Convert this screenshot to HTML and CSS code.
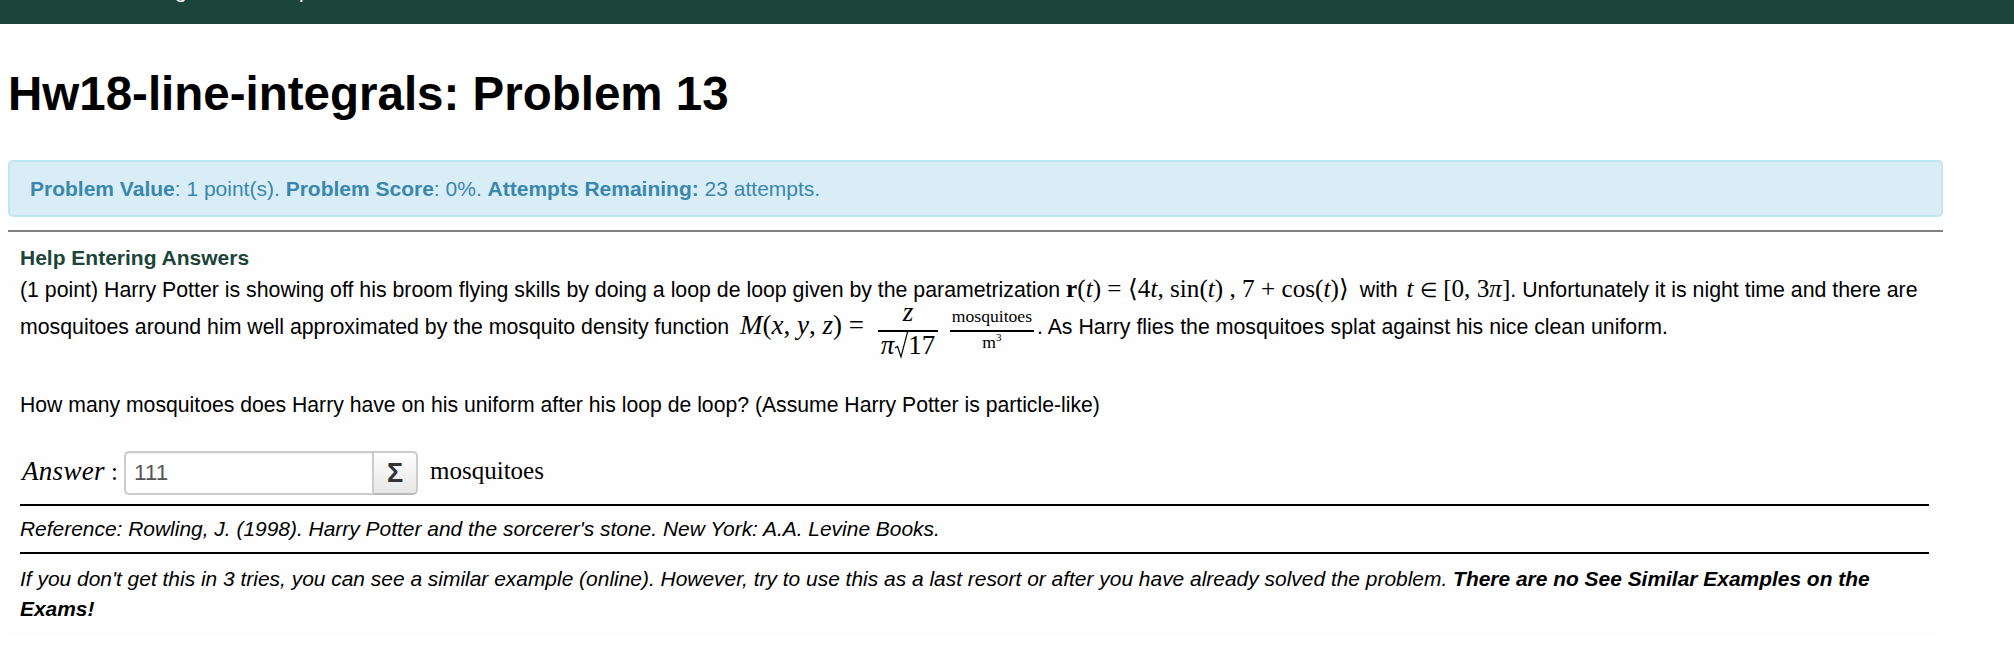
FILE: index.html
```html
<!DOCTYPE html>
<html lang="en">
<head>
    <meta charset="UTF-8">
    <meta name="viewport" content="width=device-width, initial-scale=1.0">
    <title>Hw18-line-integrals: Problem 13</title>
    <link rel="stylesheet" href="styles.css">
</head>
<body>
    <header class="top-bar">
        <span class="top-bar-text">Integrals</span>
        <span class="top-bar-text">Help</span>
    </header>
    <main class="page">
        <h1 class="page-title">Hw18-line-integrals: Problem 13</h1>
        <div class="alert-info">
            <b>Problem Value</b>: 1 point(s). <b>Problem Score</b>: 0%. <b>Attempts Remaining:</b> 23 attempts.
        </div>
        <hr class="page-rule">
        <section class="problem">
            <a class="help-link" href="#">Help Entering Answers</a>
            <div class="problem-text">
                (1 point) Harry Potter is showing off his broom flying skills by doing a loop de loop given by the parametrization
                <span class="math math-curve"><b>r</b>(<i>t</i>) = ⟨4<i>t</i>, sin(<i>t</i>) , 7 + cos(<i>t</i>)⟩</span> with <span class="math math-range"><i>t</i> <span class="elem">∈</span> [0, 3<i>π</i>]</span>. Unfortunately it is night time and there are
                mosquitoes around him well approximated by the mosquito density function
                <span class="math math-big"><i>M</i>(<i>x</i>, <i>y</i>, <i>z</i>) =</span>
                <span class="frac frac-big">
                    <span class="frac-top"><i>z</i></span>
                    <span class="frac-bottom"><i>π</i><svg class="radical" width="14" height="30" viewBox="0 0 14 30"><path d="M1 18 L3.5 16.5 L7 27 L13.5 2 L14 2" fill="none" stroke="#000" stroke-width="1.2"/></svg><span class="root">17</span></span>
                </span>
                <span class="frac frac-small">
                    <span class="frac-top">mosquitoes</span>
                    <span class="frac-bottom">m<sup>3</sup></span>
                </span><span class="after-frac">. As Harry flies the mosquitoes splat against his nice clean uniform.</span>
            </div>
            <p class="question">How many mosquitoes does Harry have on his uniform after his loop de loop? (Assume Harry Potter is particle-like)</p>
            <div class="answer-row">
                <span class="answer-label"><i class="answer-word">Answer</i> :</span>
                <div class="input-group">
                    <input class="answer-input" type="text" value="111">
                    <button class="sigma-btn">Σ</button>
                </div>
                <span class="answer-unit">mosquitoes</span>
            </div>
            <div class="note"><i>Reference: Rowling, J. (1998). Harry Potter and the sorcerer's stone. New York: A.A. Levine Books.</i></div>
            <div class="note note-last"><i>If you don't get this in 3 tries, you can see a similar example (online). However, try to use this as a last resort or after you have already solved the problem. <b>There are no See Similar Examples on the Exams!</b></i></div>
        </section>
    </main>
</body>
</html>
```

FILE: styles.css
```css
body {
    margin: 0;
    padding: 0;
    font-family: "Liberation Sans", Arial, sans-serif;
    font-size: 21px;
    line-height: 30px;
    background-color: #fff;
    color: #000;
}

.top-bar {
    height: 24px;
    background-color: #1c4539;
    overflow: hidden;
    color: #fff;
    display: flex;
    gap: 47px;
    padding-left: 140px;
}

.top-bar-text {
    margin-top: -24px;
}

.page {
    padding: 0 71px 0 8px;
}

.page-title {
    font-size: 47.5px;
    line-height: 52px;
    font-weight: bold;
    margin: 44px 0 0;
}

.alert-info {
    margin-top: 40px;
    height: 57px;
    box-sizing: border-box;
    padding: 12px 20px;
    background-color: #d9edf7;
    border: 2px solid #bce8f1;
    border-radius: 5px;
    color: #3a87ad;
}

.page-rule {
    margin: 13px 0 0;
    border: 0;
    border-top: 2px solid #808080;
}

.problem {
    height: 405px;
    box-sizing: border-box;
    padding: 12px 14px 0 12px;
    background-color: #fefefe;
}

.help-link {
    display: block;
    margin-bottom: 2px;
    color: #1c4539;
    font-weight: bold;
    text-decoration: none;
    line-height: 28px;
}

.problem-text {
    font-size: 21.3px;
}

.math {
    font-family: "Liberation Serif", serif;
    font-size: 25.2px;
}

.math-curve {
    margin-right: 5px;
}

.math-range {
    margin-left: 3px;
}

.math-big {
    font-size: 27px;
    margin-left: 5px;
}

.elem {
    font-size: 20px;
}

.frac {
    display: inline-flex;
    flex-direction: column;
    vertical-align: middle;
    text-align: center;
    font-family: "Liberation Serif", serif;
    margin: -5px 0 -15px 6px;
}

.frac-top {
    border-bottom: 2px solid #000;
    line-height: 24px;
    padding-bottom: 6px;
}

.frac-bottom {
    line-height: 30px;
    padding-bottom: 4px;
    margin: -2px 0 2px;
}

.frac-big {
    font-size: 27px;
    width: 60px;
    margin-left: 8px;
}

.frac-small {
    font-size: 17.6px;
}

.frac-small .frac-top {
    padding: 5px 2px 3px;
    line-height: 22px;
}

.frac-small .frac-bottom {
    line-height: 20px;
    padding-bottom: 14px;
    margin: 0;
}

.frac-small sup {
    font-size: 11px;
    line-height: 0;
}

.after-frac {
    margin-left: 3px;
}

.radical {
    vertical-align: -6px;
}

.root {
    border-top: 1px solid #000;
    display: inline-block;
    line-height: 28px;
}

.question {
    margin: 39px 0 0;
    font-size: 21.2px;
}

.answer-row {
    display: flex;
    align-items: center;
    margin-top: 31px;
    padding-bottom: 9px;
    border-bottom: 2px solid #000;
    font-family: "Liberation Serif", serif;
    font-size: 25px;
}

.answer-label {
    margin: 0 6px 4px 2px;
}

.answer-word {
    font-size: 27px;
    letter-spacing: 0.3px;
}

.input-group {
    display: flex;
    height: 44px;
}

.answer-input {
    width: 248px;
    box-sizing: border-box;
    padding: 4px 8px;
    border: 2px solid #ccc;
    border-right: 0;
    border-radius: 5px 0 0 5px;
    box-shadow: inset 0 1px 1px rgba(0, 0, 0, 0.075);
    font-family: "Liberation Sans", Arial, sans-serif;
    font-size: 22.5px;
    color: #555;
    outline: none;
}

.sigma-btn {
    width: 46px;
    border: 2px solid #ccc;
    border-bottom-color: #b8b8b8;
    border-radius: 0 5px 5px 0;
    background: linear-gradient(#fff, #e6e6e6);
    font-family: "Liberation Sans", Arial, sans-serif;
    font-size: 27px;
    font-weight: bold;
    color: #333;
    padding: 0;
}

.answer-unit {
    margin: 0 0 4px 12px;
}

.note {
    padding: 8px 0;
    border-bottom: 2px solid #000;
    font-size: 20.95px;
}

.note-last {
    padding-top: 10px;
    border-bottom: 0;
    line-height: 29.5px;
}
```
